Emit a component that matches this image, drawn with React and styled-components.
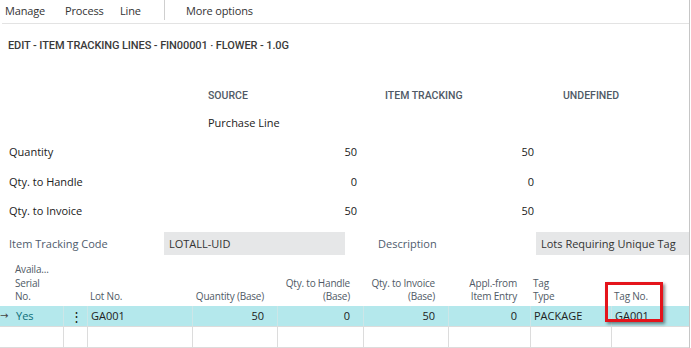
import React from 'react';
import styled, { createGlobalStyle } from 'styled-components';

const Global = createGlobalStyle`
    body {
        margin: 0;
        background: #fff;
        font-family: "Open Sans", "Noto Sans", sans-serif;
        color: #212121;
    }
`;

const Page = styled.div`
    width: 689px;
    height: 348px;
    border-right: 1px solid #c6c6c6;
    overflow: hidden;
`;

const Toolbar = styled.div`
    display: flex;
    align-items: center;
    height: 23px;
    margin-left: 2px;
    padding-left: 3px;
    border-bottom: 1px solid #e3e3e3;
    font-size: 11px;
    letter-spacing: -0.15px;
    color: #333;
`;

const ToolItem = styled.span`
    flex: 0 0 auto;
    width: ${p => (p.$w ? p.$w + 'px' : 'auto')};
    margin-left: ${p => p.$left || 0}px;
    padding-bottom: 3px;
`;

const ToolSep = styled.div`
    width: 1px;
    height: 20px;
    margin-top: -3px;
    background: #cfcfcf;
`;

const Title = styled.h1`
    margin: 15px 0 0 8px;
    font-family: Roboto, sans-serif;
    font-weight: 500;
    font-size: 11px;
    letter-spacing: -0.1px;
    color: #3a3a3a;
    line-height: 14px;
`;

const Fields = styled.div`
    display: grid;
    grid-template-columns: 208px 177px 178px 1fr;
    margin-top: 31px;
    font-size: 11px;
`;

const ColHead = styled.div`
    font-family: Roboto, sans-serif;
    font-weight: 500;
    font-size: 10.5px;
    color: #505a66;
    height: 24px;
    line-height: 24px;
`;

const Cell = styled.div`
    height: ${p => p.$h || 29.5}px;
    display: flex;
    align-items: center;
    padding-left: ${p => p.$pl || 0}px;
`;

const Value = styled.div`
    width: 149px;
    text-align: right;
`;

const TrackRow = styled.div`
    display: flex;
    align-items: center;
    margin-top: 6px;
    height: 23px;
    font-size: 11px;
`;

const Label = styled.div`
    flex: 0 0 ${p => p.$w}px;
    padding-left: ${p => p.$pl || 0}px;
    color: #505c6d;
    box-sizing: border-box;
`;

const Box = styled.div`
    flex: 0 0 ${p => p.$w}px;
    height: 23px;
    box-sizing: border-box;
    padding-left: 5px;
    display: flex;
    align-items: center;
    background: #e6e7e8;
    color: #333;
    white-space: nowrap;
    overflow: hidden;
`;

const TableWrap = styled.div`
    position: relative;
    margin-top: 7px;
    font-size: 11px;
`;

const cols = '12px 51px 24px 105px 85px 86px 85px 82px 81px 1fr';

const HeadRow = styled.div`
    display: grid;
    grid-template-columns: ${cols};
    height: 44px;
    font-size: 10px;
    letter-spacing: -0.2px;
    color: #505a66;
    line-height: 13.5px;
`;

const HeadCell = styled.div`
    display: flex;
    flex-direction: column;
    justify-content: flex-end;
    padding: 0 ${p => (p.$right ? 13 : 2)}px 2px ${p => (p.$right ? 0 : 3)}px;
    text-align: ${p => (p.$right ? 'right' : 'left')};
    white-space: nowrap;
`;

const Row = styled.div`
    display: grid;
    grid-template-columns: ${cols};
    height: 21px;
    box-sizing: border-box;
    background: ${p => (p.$active ? '#b4e8ec' : '#fff')};
    border-bottom: 1px solid #dcdcdc;
`;

const DataCell = styled.div`
    display: flex;
    align-items: center;
    justify-content: ${p => (p.$right ? 'flex-end' : 'flex-start')};
    padding: 0 ${p => (p.$right ? 13 : 2)}px 0 ${p => (p.$right ? 2 : p.$pl ?? 3)}px;
    border-left: ${p => (p.$line ? '1px solid ' + (p.$active ? '#cde6e8' : '#dcdcdc') : 'none')};
    color: ${p => p.$color || '#212121'};
    font-family: ${p => p.$font || 'inherit'};
    font-size: ${p => p.$size || 11}px;
    white-space: nowrap;
`;

const Highlight = styled.div`
    position: absolute;
    left: 605px;
    top: 20px;
    width: 58px;
    height: 40px;
    box-sizing: border-box;
    border: 3px solid #e4141b;
    box-shadow: 2px 2px 3px rgba(0, 0, 0, 0.45);
`;

const columns = [
    { key: 'arrow' },
    { key: 'serial', head: ['Availa...', 'Serial', 'No.'] },
    { key: 'menu' },
    { key: 'lot', head: ['Lot No.'] },
    { key: 'qty', head: ['Quantity (Base)'], right: true },
    { key: 'handle', head: ['Qty. to Handle', '(Base)'], right: true },
    { key: 'invoice', head: ['Qty. to Invoice', '(Base)'], right: true },
    { key: 'appl', head: ['Appl.-from', 'Item Entry'], right: true },
    { key: 'tagType', head: ['Tag', 'Type'] },
    { key: 'tagNo', head: ['Tag No.'] },
];

const line = {
    arrow: '→', serial: 'Yes', menu: '⋮', lot: 'GA001', qty: '50', handle: '0',
    invoice: '50', appl: '0', tagType: 'PACKAGE', tagNo: 'GA001',
};

const quantities = [
    ['Quantity', '50', '50'],
    ['Qty. to Handle', '0', '0'],
    ['Qty. to Invoice', '50', '50'],
];

function cellLook(key) {
    if (key === 'serial') return { $color: '#0b6e78', $pl: 4 };
    if (key === 'arrow') return { $color: '#444', $size: 10, $pl: 0, $font: '"DejaVu Sans", sans-serif' };
    if (key === 'menu') return { $size: 13, $pl: 6 };
    return {};
}

export default function App() {
    return (
        <Page>
            <Global />
            <Toolbar>
                <ToolItem $w={60}>Manage</ToolItem>
                <ToolItem $w={55}>Process</ToolItem>
                <ToolItem $w={44}>Line</ToolItem>
                <ToolSep />
                <ToolItem $left={21}>More options</ToolItem>
            </Toolbar>
            <Title>EDIT - ITEM TRACKING LINES - FIN00001 · FLOWER - 1.0G</Title>

            <Fields>
                <div />
                <ColHead>SOURCE</ColHead>
                <ColHead>ITEM TRACKING</ColHead>
                <ColHead>UNDEFINED</ColHead>

                <div />
                <Cell $h={29}>Purchase Line</Cell>
                <div />
                <div />

                {quantities.map(([label, a, b]) => (
                    <React.Fragment key={label}>
                        <Cell $pl={9}>{label}</Cell>
                        <Cell><Value>{a}</Value></Cell>
                        <Cell><Value>{b}</Value></Cell>
                        <div />
                    </React.Fragment>
                ))}
            </Fields>

            <TrackRow>
                <Label $w={164} $pl={9}>Item Tracking Code</Label>
                <Box $w={181}>LOTALL-UID</Box>
                <Label $w={191} $pl={33}>Description</Label>
                <Box $w={153}>Lots Requiring Unique Tag</Box>
            </TrackRow>

            <TableWrap>
                <HeadRow>
                    {columns.map(c => (
                        <HeadCell key={c.key} $right={c.right}>
                            {(c.head || []).map(h => <span key={h}>{h}</span>)}
                        </HeadCell>
                    ))}
                </HeadRow>
                <Row $active>
                    {columns.map((c, i) => (
                        <DataCell key={c.key} $right={c.right} $active $line={i > 1} {...cellLook(c.key)}>
                            {line[c.key]}
                        </DataCell>
                    ))}
                </Row>
                <Row>
                    {columns.map((c, i) => (
                        <DataCell key={c.key} $line={i > 1} />
                    ))}
                </Row>
                <Highlight />
            </TableWrap>
        </Page>
    );
}
